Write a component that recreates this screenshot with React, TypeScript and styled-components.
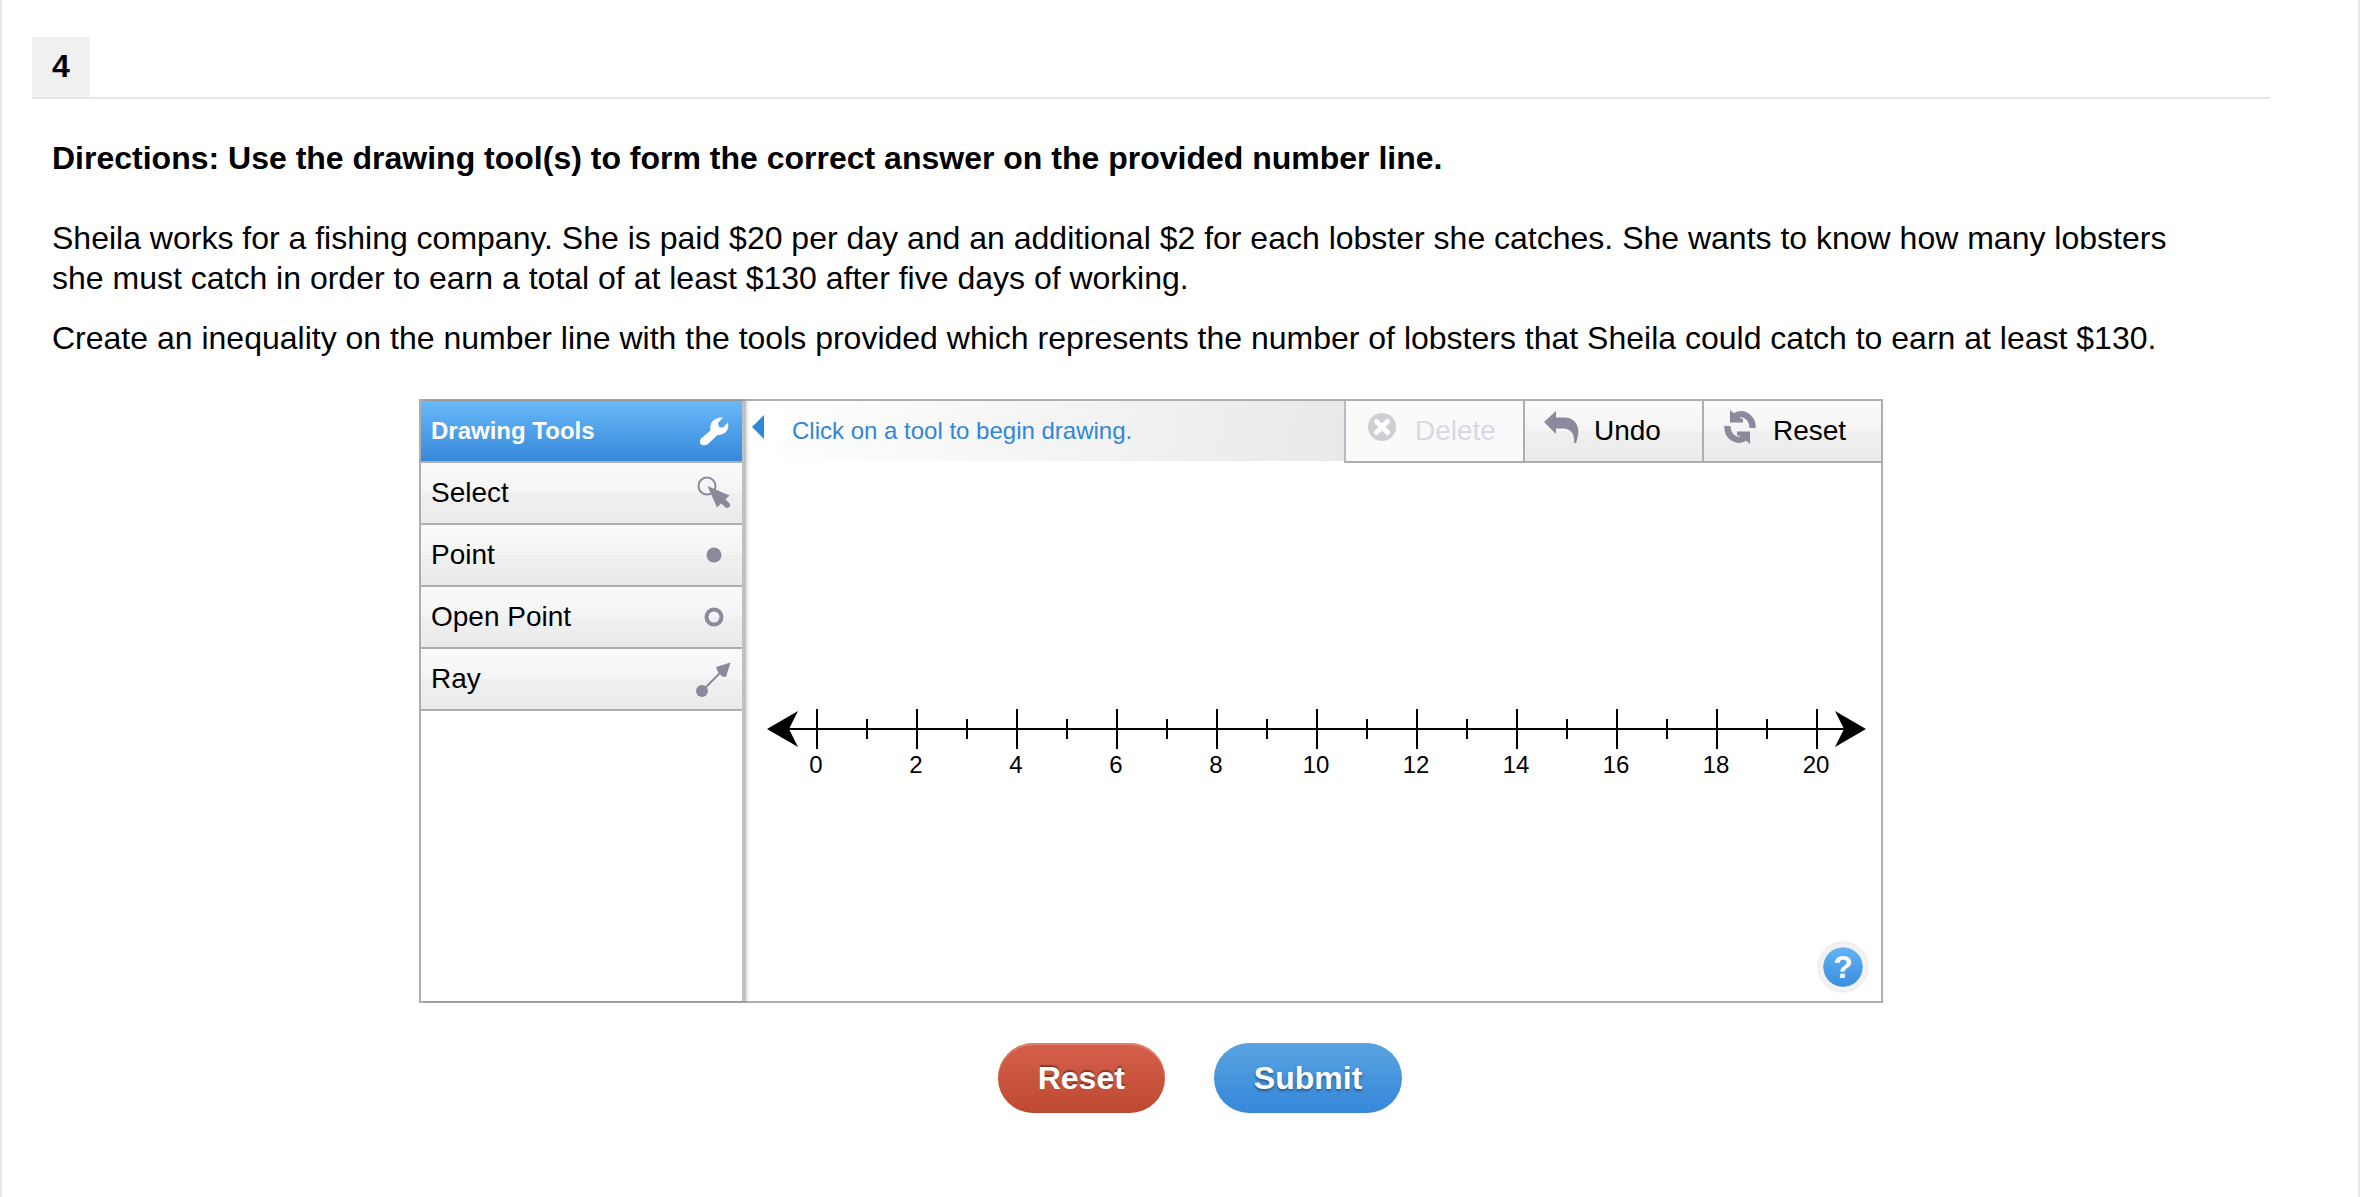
import React from "react";
import styled, { createGlobalStyle } from "styled-components";

const sans = `"Liberation Sans", Arial, Helvetica, sans-serif`;
const line = "#aeaeae";
const iconGrey = "#8b899b";

const GlobalStyle = createGlobalStyle`
  *, *::before, *::after { box-sizing: border-box; }
  body { margin: 0; background: #fff; color: #000; font-family: ${sans}; }
`;

const Page = styled.div`
  min-height: 100vh;
  padding: 37px 88px 40px 30px;
  border: solid #e6e6e6;
  border-width: 0 2px;
`;

const QuestionHeader = styled.header`
  display: flex;
  border-bottom: 2px solid #e6e6e6;
`;

const QuestionNumber = styled.h1`
  margin: 0;
  padding: 9px 20px 11px;
  background: #f0f0f0;
  font-size: 32px;
  line-height: 40px;
`;

const Prompt = styled.section`
  display: flex;
  flex-direction: column;
  gap: 20px;
  padding: 39px 80px 0 20px;
  font-size: 32px;
  line-height: 40px;
`;

const Directions = styled.h2`
  margin: 0 0 20px;
  font-size: 32px;
`;

const Paragraph = styled.p`
  margin: 0;
`;

const Widget = styled.section`
  display: flex;
  width: 100%;
  max-width: 1464px;
  min-height: 604px;
  margin: 41px auto 0;
  border: 2px solid ${line};
`;

const Sidebar = styled.aside`
  z-index: 1;
  flex: 0 0 321px;
  background: #fff;
  box-shadow: 4px 0 0 #c0c0c0, 4px 0 4px rgba(0, 0, 0, 0.3);
  clip-path: inset(-2px -10px);
`;

const Row = styled.div`
  display: flex;
  align-items: center;
  justify-content: space-between;
  width: 100%;
  height: 62px;
  padding: 0 10px;
  border: 0;
  border-bottom: 2px solid ${line};
`;

const SidebarTitle = styled(Row)`
  background: linear-gradient(#68b8fa, #3789d9);
  color: #fff;
  font-size: 24px;
  font-weight: bold;
`;

const face = "linear-gradient(#fafafa, #f4f4f4 50%, #f0f0f0 50%, #eaeaea)";

const ToolButton = styled(Row).attrs({ as: "button", type: "button" })`
  background: ${face};
  color: #000;
  font-family: ${sans};
  font-size: 28px;
`;

const Board = styled.div`
  display: flex;
  flex: 1;
  flex-direction: column;
  min-width: 0;
`;

const Toolbar = styled.div`
  display: flex;
`;

const Hint = styled.p`
  display: flex;
  flex: 1;
  align-items: center;
  gap: 28px;
  height: 60px;
  margin: 0;
  padding-left: 10px;
  background: linear-gradient(100deg, #fff 5%, #e9e9e9);
  color: #2f86da;
  font-size: 24px;
`;

const ActionButton = styled.button`
  display: flex;
  align-items: center;
  gap: 16px;
  width: 179px;
  height: 62px;
  padding: 0 0 0 17px;
  border: solid ${line};
  border-width: 0 0 2px 2px;
  background: ${face};
  color: #000;
  font-family: ${sans};
  font-size: 28px;

  svg {
    margin-bottom: 8px;
  }

  &:disabled {
    border-left-color: #b9b8cb;
    background: #fafafa;
    color: #d9d8e2;
  }
`;

const Canvas = styled.div`
  display: flex;
  flex: 1;
  flex-direction: column;
  align-items: flex-end;
  justify-content: space-between;
  padding: 244px 14px 10px 24px;
`;

const NumberLineSvg = styled.svg`
  display: block;
  width: 100%;
  font-family: ${sans};
  font-size: 24px;
`;

const HelpButton = styled.button`
  display: flex;
  align-items: center;
  justify-content: center;
  width: 48px;
  height: 48px;
  padding: 0;
  border: 4px solid #f2f2f2;
  border-radius: 50%;
  background: linear-gradient(#68b8fa, #3789d9) border-box padding-box;
  box-shadow: inset 0 0 1px #fff, 0 0 3px rgba(0, 0, 0, 0.25);
  color: #fff;
  font-family: ${sans};
  font-size: 32px;
  font-weight: bold;
  line-height: 40px;
`;

const Actions = styled.div`
  display: flex;
  justify-content: center;
  gap: 49px;
  padding: 40px 0 0 98px;
`;

const PillButton = styled.button<{ $tone: "red" | "blue" }>`
  height: 70px;
  padding: 0 40px;
  border: 0;
  border-radius: 35px;
  color: #fff;
  font-family: ${sans};
  font-size: 32px;
  font-weight: bold;
  background: ${(p) =>
    p.$tone === "red"
      ? "linear-gradient(#d4604c, #be4930)"
      : "linear-gradient(#5aa3e0, #3587da)"};
  box-shadow: ${(p) => (p.$tone === "red" ? "inset 0 2px 0 #e08269" : "none")};
  text-shadow: ${(p) =>
    p.$tone === "red" ? "0 -2px 1px rgba(0, 0, 0, 0.35)" : "0 2px 3px rgba(0, 0, 0, 0.4)"};
`;

const Icon = ({ children, color = iconGrey }: { children: React.ReactNode; color?: string }) => (
  <svg width="36" height="36" viewBox="0 0 36 36" fill={color} overflow="visible" aria-hidden="true">
    {children}
  </svg>
);

const WrenchIcon = () => (
  <Icon color="#fff">
    <path d="M5 25.500 14.500 17.500C13 10 18 4 27 4.500L22 10 23 14 27 14.500 32 9.500C33.500 16.500 29.500 22 21.500 22L12 31C10.500 32.500 6.500 32.500 5 31.500C4 30.500 3.500 27 5 25.500Z" />
  </Icon>
);

const SelectIcon = () => (
  <Icon>
    <circle cx="11" cy="11" r="8.500" fill="none" stroke={iconGrey} strokeWidth="2" />
    <path d="M11.500 11 33.500 20.500 21 32.500Z" />
    <path d="M25 24 31 30" stroke={iconGrey} strokeWidth="6" strokeLinecap="round" />
  </Icon>
);

const PointIcon = () => (
  <Icon>
    <circle cx="18" cy="18" r="7.500" />
  </Icon>
);

const OpenPointIcon = () => (
  <Icon>
    <circle cx="18" cy="18" r="7.500" fill="none" stroke={iconGrey} strokeWidth="4" />
  </Icon>
);

const RayIcon = () => (
  <Icon>
    <path d="M6 30 27 9" stroke={iconGrey} strokeWidth="2" />
    <circle cx="6" cy="30" r="6" />
    <path d="M34.500 1.500 20 6 22 11 26 15.500 30 16Z" />
  </Icon>
);

const DeleteIcon = () => (
  <Icon>
    <circle cx="19" cy="18" r="14" fill="#cfced5" />
    <path d="M13.500 12.500 24.500 23.500M24.500 12.500 13.500 23.500" stroke="#fff" strokeWidth="5" strokeLinecap="round" />
  </Icon>
);

const UndoIcon = () => (
  <Icon>
    <path d="M2 13 14 2V8.500H23C34 9 40 19 34 34H32C33 25 29 20 22 19.500H14V25Z" />
  </Icon>
);

const ResetIcon = () => (
  <Icon>
    <g fill="none" stroke={iconGrey} strokeWidth="6.500">
      <path d="M14 7.500C21 1.500 32 8 31.500 19" />
      <path d="M24 28.500C17 34.500 6 28 6.500 17" />
    </g>
    <path d="M9 1V13.500H22V10L17 8Z" />
    <path d="M29 35V22.500H16V26L21 28Z" />
  </Icon>
);

const NumberLine = () => {
  const ticks = Array.from({ length: 21 }, (_, n) => n);
  return (
    <NumberLineSvg viewBox="0 0 1101 70" role="img" aria-label="Number line from 0 to 20">
      <path d="M20 22H1080" stroke="#000" strokeWidth="2" />
      <path d="M1 22 32 4 23 22 32 40ZM1100 22 1069 4 1078 22 1069 40Z" />
      {ticks.map((n) => {
        const half = n % 2 ? 10 : 20;
        return <path key={n} d={`M${51 + n * 50} ${22 - half}v${half * 2}`} stroke="#000" strokeWidth="2" />;
      })}
      {ticks.filter((n) => n % 2 === 0).map((n) => (
        <text key={n} x={50 + n * 50} y="66" textAnchor="middle">{n}</text>
      ))}
    </NumberLineSvg>
  );
};

const tools = [
  { name: "Select", icon: <SelectIcon /> },
  { name: "Point", icon: <PointIcon /> },
  { name: "Open Point", icon: <OpenPointIcon /> },
  { name: "Ray", icon: <RayIcon /> },
];

export default function App() {
  return (
    <>
      <GlobalStyle />
      <Page>
        <QuestionHeader>
          <QuestionNumber>4</QuestionNumber>
        </QuestionHeader>
        <main>
          <Prompt>
            <Directions>
              Directions: Use the drawing tool(s) to form the correct answer on the provided number line.
            </Directions>
            <Paragraph>
              Sheila works for a fishing company. She is paid $20 per day and an additional $2 for each
              lobster she catches. She wants to know how many lobsters she must catch in order to earn a
              total of at least $130 after five days of working.
            </Paragraph>
            <Paragraph>
              Create an inequality on the number line with the tools provided which represents the number
              of lobsters that Sheila could catch to earn at least $130.
            </Paragraph>
          </Prompt>
          <Widget>
            <Sidebar>
              <SidebarTitle>
                Drawing Tools
                <WrenchIcon />
              </SidebarTitle>
              {tools.map((tool) => (
                <ToolButton key={tool.name}>
                  {tool.name}
                  {tool.icon}
                </ToolButton>
              ))}
            </Sidebar>
            <Board>
              <Toolbar>
                <Hint>
                  <svg width="12" height="32" viewBox="0 0 12 32" fill="#2f86da" aria-hidden="true">
                    <path d="M0 12 12 0V24Z" />
                  </svg>
                  Click on a tool to begin drawing.
                </Hint>
                <ActionButton type="button" disabled>
                  <DeleteIcon />
                  Delete
                </ActionButton>
                <ActionButton type="button">
                  <UndoIcon />
                  Undo
                </ActionButton>
                <ActionButton type="button">
                  <ResetIcon />
                  Reset
                </ActionButton>
              </Toolbar>
              <Canvas>
                <NumberLine />
                <HelpButton type="button">?</HelpButton>
              </Canvas>
            </Board>
          </Widget>
          <Actions>
            <PillButton type="button" $tone="red">Reset</PillButton>
            <PillButton type="button" $tone="blue">Submit</PillButton>
          </Actions>
        </main>
      </Page>
    </>
  );
}
